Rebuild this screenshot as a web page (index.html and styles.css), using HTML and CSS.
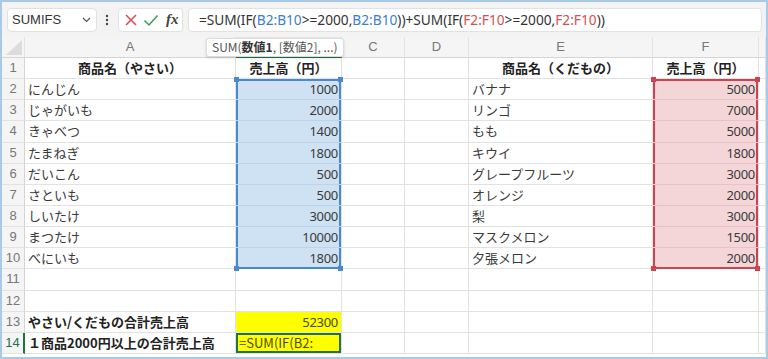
FILE: index.html
```html
<!DOCTYPE html>
<html lang="ja">
<head>
    <meta charset="UTF-8">
    <title>SUM IF</title>
    <link rel="stylesheet" href="styles.css">
</head>
<body>
<div class="window">
    <div class="formula-bar">
        <div class="name-box">
            <span>SUMIFS</span>
            <svg class="chevron" width="9" height="6" viewBox="0 0 9 6"><path d="M1 1l3.5 3.5L8 1" fill="none" stroke="#555" stroke-width="1.2"/></svg>
        </div>
        <svg class="dots" width="4" height="12" viewBox="0 0 4 12"><circle cx="2" cy="2" r="1.2" fill="#444"/><circle cx="2" cy="6" r="1.2" fill="#444"/><circle cx="2" cy="10" r="1.2" fill="#444"/></svg>
        <div class="edit-buttons">
            <svg width="14" height="14" viewBox="0 0 14 14"><path d="M2 2l10 10M12 2L2 12" stroke="#e0474c" stroke-width="1.5" fill="none"/></svg>
            <svg width="16" height="14" viewBox="0 0 16 14"><path d="M1.5 7.5l4.5 4.5 8.5-9.5" stroke="#3f9b5a" stroke-width="1.5" fill="none"/></svg>
            <span class="fx">fx</span>
        </div>
        <div class="formula-input">
            =SUM(IF(<span class="ref-blue">B2:B10</span>&gt;=2000,<span class="ref-blue">B2:B10</span>))+SUM(IF(<span class="ref-red">F2:F10</span>&gt;=2000,<span class="ref-red">F2:F10</span>))
        </div>
    </div>

    <div class="sheet">
        <div class="row col-heads">
            <div class="cell corner">
                <svg width="16" height="15" viewBox="0 0 16 15"><path d="M16 0V15H0z" fill="#dcdcdc"/></svg>
            </div>
            <div class="cell">A</div>
            <div class="cell active-col"></div>
            <div class="cell">C</div>
            <div class="cell">D</div>
            <div class="cell">E</div>
            <div class="cell">F</div>
            <div class="cell"></div>
            <div class="tooltip">SUM(<b>数値1</b>, [数値2], ...)</div>
        </div>

        <div class="row">
            <div class="cell rn">1</div>
            <div class="cell head">商品名（やさい）</div>
            <div class="cell head">売上高（円）</div>
            <div class="cell"></div><div class="cell"></div>
            <div class="cell head">商品名（くだもの）</div>
            <div class="cell head">売上高（円）</div>
            <div class="cell"></div>
        </div>
        <div class="row">
            <div class="cell rn">2</div>
            <div class="cell">にんじん</div>
            <div class="cell num sel-blue first">1000</div>
            <div class="cell"></div><div class="cell"></div>
            <div class="cell">バナナ</div>
            <div class="cell num sel-red first">5000</div>
            <div class="cell"></div>
        </div>
        <div class="row">
            <div class="cell rn">3</div>
            <div class="cell">じゃがいも</div>
            <div class="cell num sel-blue">2000</div>
            <div class="cell"></div><div class="cell"></div>
            <div class="cell">リンゴ</div>
            <div class="cell num sel-red">7000</div>
            <div class="cell"></div>
        </div>
        <div class="row">
            <div class="cell rn">4</div>
            <div class="cell">きゃべつ</div>
            <div class="cell num sel-blue">1400</div>
            <div class="cell"></div><div class="cell"></div>
            <div class="cell">もも</div>
            <div class="cell num sel-red">5000</div>
            <div class="cell"></div>
        </div>
        <div class="row">
            <div class="cell rn">5</div>
            <div class="cell">たまねぎ</div>
            <div class="cell num sel-blue">1800</div>
            <div class="cell"></div><div class="cell"></div>
            <div class="cell">キウイ</div>
            <div class="cell num sel-red">1800</div>
            <div class="cell"></div>
        </div>
        <div class="row">
            <div class="cell rn">6</div>
            <div class="cell">だいこん</div>
            <div class="cell num sel-blue">500</div>
            <div class="cell"></div><div class="cell"></div>
            <div class="cell">グレープフルーツ</div>
            <div class="cell num sel-red">3000</div>
            <div class="cell"></div>
        </div>
        <div class="row">
            <div class="cell rn">7</div>
            <div class="cell">さといも</div>
            <div class="cell num sel-blue">500</div>
            <div class="cell"></div><div class="cell"></div>
            <div class="cell">オレンジ</div>
            <div class="cell num sel-red">2000</div>
            <div class="cell"></div>
        </div>
        <div class="row">
            <div class="cell rn">8</div>
            <div class="cell">しいたけ</div>
            <div class="cell num sel-blue">3000</div>
            <div class="cell"></div><div class="cell"></div>
            <div class="cell">梨</div>
            <div class="cell num sel-red">3000</div>
            <div class="cell"></div>
        </div>
        <div class="row">
            <div class="cell rn">9</div>
            <div class="cell">まつたけ</div>
            <div class="cell num sel-blue">10000</div>
            <div class="cell"></div><div class="cell"></div>
            <div class="cell">マスクメロン</div>
            <div class="cell num sel-red">1500</div>
            <div class="cell"></div>
        </div>
        <div class="row">
            <div class="cell rn">10</div>
            <div class="cell">べにいも</div>
            <div class="cell num sel-blue last">1800</div>
            <div class="cell"></div><div class="cell"></div>
            <div class="cell">夕張メロン</div>
            <div class="cell num sel-red last">2000</div>
            <div class="cell"></div>
        </div>
        <div class="row">
            <div class="cell rn">11</div>
            <div class="cell"></div><div class="cell"></div><div class="cell"></div>
            <div class="cell"></div><div class="cell"></div><div class="cell"></div><div class="cell"></div>
        </div>
        <div class="row">
            <div class="cell rn">12</div>
            <div class="cell"></div><div class="cell"></div><div class="cell"></div>
            <div class="cell"></div><div class="cell"></div><div class="cell"></div><div class="cell"></div>
        </div>
        <div class="row">
            <div class="cell rn">13</div>
            <div class="cell bold">やさい/くだもの合計売上高</div>
            <div class="cell num yellow">52300</div>
            <div class="cell"></div><div class="cell"></div><div class="cell"></div><div class="cell"></div><div class="cell"></div>
        </div>
        <div class="row">
            <div class="cell rn active-row">14</div>
            <div class="cell bold">１商品2000円以上の合計売上高</div>
            <div class="cell yellow active-cell">=SUM(IF(B2:</div>
            <div class="cell"></div><div class="cell"></div><div class="cell"></div><div class="cell"></div><div class="cell"></div>
        </div>
    </div>
</div>
</body>
</html>
```

FILE: styles.css
```css
body {
    margin: 0;
    font-family: "Noto Sans CJK JP", sans-serif;
}

.window {
    width: 768px;
    height: 359px;
    box-sizing: border-box;
    border: 2px solid #a9c9e8;
    background: #ffffff;
    overflow: hidden;
}

/* formula bar */

.formula-bar {
    height: 35px;
    box-sizing: border-box;
    background: #f3f3f3;
    display: flex;
    align-items: center;
    padding: 0 4px 0 5px;
}

.name-box {
    width: 90px;
    height: 24px;
    box-sizing: border-box;
    background: #fff;
    border: 1px solid #e2e2e2;
    border-radius: 4px;
    display: flex;
    align-items: center;
    justify-content: space-between;
    padding: 0 5px 0 4px;
    font-family: "Liberation Sans", sans-serif;
    font-size: 13px;
    color: #333;
}

.dots {
    margin: 0 9px 0 8px;
}

.edit-buttons {
    width: 65px;
    height: 24px;
    box-sizing: border-box;
    background: #fff;
    border: 1px solid #e2e2e2;
    border-radius: 4px;
    display: flex;
    align-items: center;
    gap: 5px;
    padding-left: 5px;
}

.fx {
    font-family: "Liberation Serif", serif;
    font-style: italic;
    font-weight: bold;
    font-size: 15px;
    color: #444;
    margin-left: 2px;
}

.formula-input {
    flex: 1;
    margin-left: 5px;
    height: 24px;
    box-sizing: border-box;
    background: #fff;
    border: 1px solid #e2e2e2;
    border-radius: 4px;
    padding-left: 10px;
    font-family: "Noto Sans", sans-serif;
    font-size: 13.7px;
    line-height: 22px;
    color: #333;
    white-space: nowrap;
}

.ref-blue {
    color: #3b7dd0;
}

.ref-red {
    color: #d2504f;
}

/* sheet */

.row {
    display: grid;
    grid-template-columns: 23px 211px 106px 63px 64px 184px 106px 1fr;
    height: 21.15px;
}

.cell {
    box-sizing: border-box;
    border-right: 1px solid #e2e2e2;
    border-bottom: 1px solid #e2e2e2;
    padding: 0 3px;
    font-size: 13px;
    line-height: 20px;
    color: #3a3a3a;
    white-space: nowrap;
    overflow: hidden;
    position: relative;
}

.col-heads {
    position: relative;
    height: 21px;
}

.col-heads .cell {
    background: #f5f5f5;
    border-bottom: 1px solid #d4d4d4;
    text-align: center;
    color: #777;
    font-family: "Liberation Sans", sans-serif;
    font-size: 13px;
}

.col-heads .corner {
    padding: 3px 0 0 4px;
    text-align: left;
}

.col-heads .active-col {
    background: #ebebeb;
    border-bottom: 2px solid #217346;
}

.tooltip {
    position: absolute;
    left: 204px;
    top: 1px;
    height: 17px;
    padding: 0 5px;
    background: #fff;
    border: 1px solid #dcdcdc;
    border-radius: 3px;
    box-shadow: 0 1px 3px rgba(0, 0, 0, 0.15);
    font-size: 12px;
    line-height: 16px;
    color: #555;
    white-space: nowrap;
    z-index: 2;
}

.tooltip b {
    color: #333;
}

.rn {
    background: #f5f5f5;
    border-right: 1px solid #d4d4d4;
    text-align: center;
    color: #777;
    font-family: "Liberation Sans", sans-serif;
    padding: 0;
}

.rn.active-row {
    color: #217346;
    border-right: 2px solid #217346;
}

.head {
    font-weight: bold;
    text-align: center;
    color: #222;
}

.bold {
    font-weight: bold;
    color: #222;
}

.num {
    text-align: right;
    font-family: "Noto Sans", sans-serif;
    letter-spacing: -0.3px;
}

.sel-blue {
    background: #cfe2f3;
    border-bottom-color: #bdd3ea;
    box-shadow: inset 2px 0 #4a88cf, inset -2px 0 #4a88cf;
}

.sel-blue.first {
    box-shadow: inset 2px 0 #4a88cf, inset -2px 0 #4a88cf, inset 0 2px #4a88cf;
}

.sel-blue.last {
    border-bottom: 0;
    box-shadow: inset 2px 0 #4a88cf, inset -2px 0 #4a88cf, inset 0 -2px #4a88cf;
}

.sel-red {
    background: #f4d6d8;
    border-bottom-color: #e8c2c5;
    box-shadow: inset 2px 0 #cc4450, inset -2px 0 #cc4450;
}

.sel-red.first {
    box-shadow: inset 2px 0 #cc4450, inset -2px 0 #cc4450, inset 0 2px #cc4450;
}

.sel-red.last {
    border-bottom: 0;
    box-shadow: inset 2px 0 #cc4450, inset -2px 0 #cc4450, inset 0 -2px #cc4450;
}

.yellow {
    background: #ffff00;
    color: #4a4a00;
}

.active-cell {
    box-shadow: inset 0 0 0 2px #217346;
    overflow: visible;
}

/* range handles */

.sel-blue.first::before,
.sel-blue.first::after,
.sel-blue.last::before,
.sel-blue.last::after,
.sel-red.first::before,
.sel-red.first::after,
.sel-red.last::before,
.sel-red.last::after {
    content: "";
    position: absolute;
    width: 5px;
    height: 5px;
    background: #4a88cf;
}

.sel-red.first::before,
.sel-red.first::after,
.sel-red.last::before,
.sel-red.last::after {
    background: #cc4450;
}

.first::before { left: -2px; top: -2px; }
.first::after { right: -2px; top: -2px; }
.last::before { left: -2px; bottom: -2px; }
.last::after { right: -2px; bottom: -2px; }

.sel-blue, .sel-red {
    overflow: visible;
    z-index: 1;
}
```
